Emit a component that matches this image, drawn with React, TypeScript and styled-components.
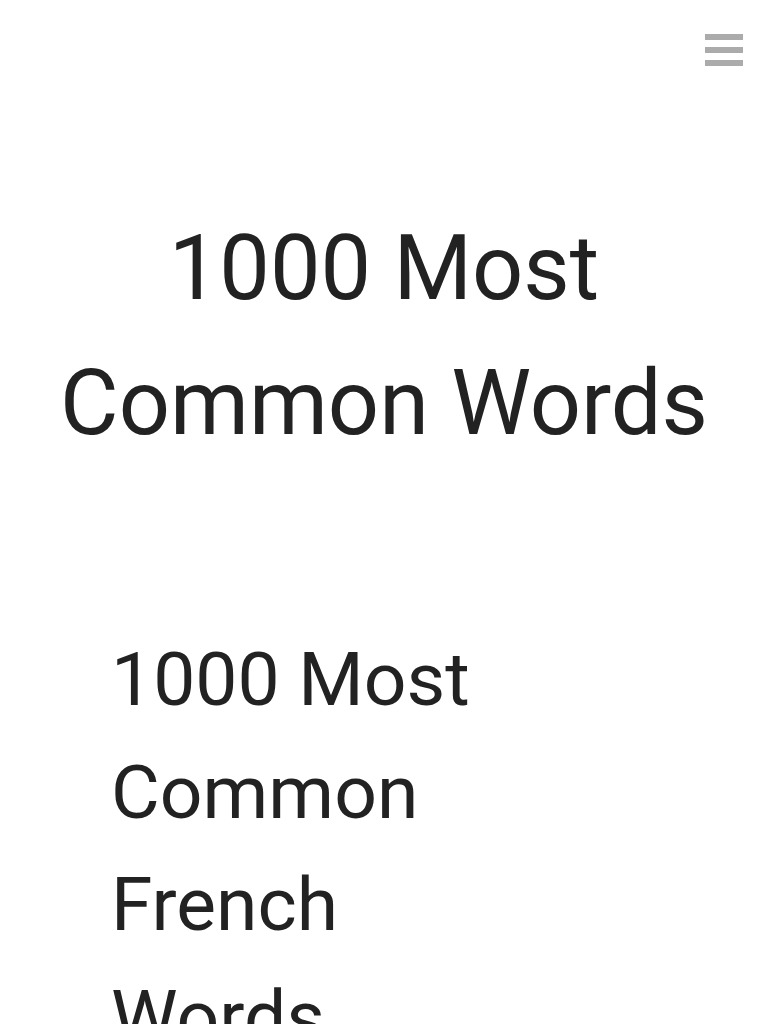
import React from "react";
import styled, { createGlobalStyle } from "styled-components";

const Global = createGlobalStyle`
  html, body { margin: 0; padding: 0; background: #ffffff; }
  body { font-family: Roboto, "Noto Sans", Arial, sans-serif; color: #222222; }
`;

const Page = styled.div`
  width: 768px;
  min-height: 1024px;
  overflow: hidden;
  display: flex;
  flex-direction: column;
`;

const TopBar = styled.header`
  display: flex;
  justify-content: flex-end;
  padding: 34px 25px 0 0;
  height: 32px;
`;

const MenuButton = styled.button`
  border: 0;
  background: none;
  padding: 0;
  width: 38px;
  height: 32px;
  display: flex;
  flex-direction: column;
  justify-content: flex-start;
  gap: 7px;
  cursor: pointer;
`;

const Bar = styled.span`
  display: block;
  width: 38px;
  height: 6px;
  background: #ababab;
`;

const Hero = styled.h1`
  margin: 135px 0 0;
  font-family: Roboto, sans-serif;
  font-weight: 400;
  font-size: 90px;
  line-height: 1.5;
  text-align: center;
  color: #222222;
`;

const Section = styled.section`
  padding: 152px 0 0 111px;
`;

const SubTitle = styled.h2`
  margin: 0;
  width: 420px;
  font-family: Roboto, sans-serif;
  font-weight: 400;
  font-size: 75px;
  line-height: 1.5;
  color: #222222;
`;

export default function App() {
  return (
    <>
      <Global />
      <Page>
        <TopBar>
          <MenuButton aria-label="Menu">
            <Bar />
            <Bar />
            <Bar />
          </MenuButton>
        </TopBar>
        <Hero>
          1000 Most
          <br />
          Common Words
        </Hero>
        <Section>
          <SubTitle>1000 Most Common French Words</SubTitle>
        </Section>
      </Page>
    </>
  );
}
